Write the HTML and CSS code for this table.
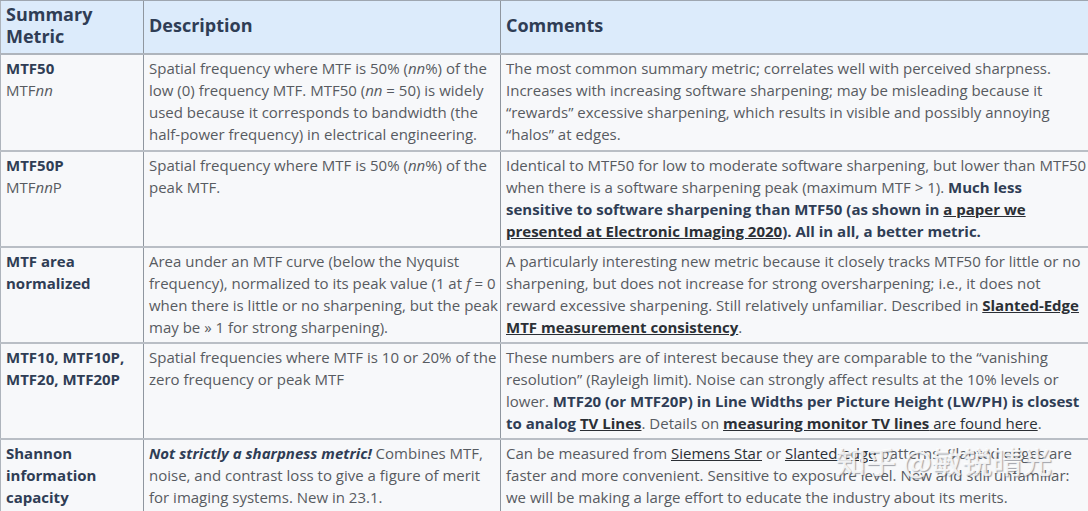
FILE: index.html
```html
<!DOCTYPE html>
<html>
<head>
<meta charset="utf-8">
<link rel="stylesheet" href="styles.css">
</head>
<body>
<div class="page">
<table class="metrics">
  <colgroup>
    <col class="c1"><col class="c2"><col class="c3">
  </colgroup>
  <thead>
    <tr>
      <th>Summary<br>Metric</th>
      <th>Description</th>
      <th>Comments</th>
    </tr>
  </thead>
  <tbody>
    <tr class="r1">
      <td><b>MTF50</b><br>MTF<i>nn</i></td>
      <td>Spatial frequency where MTF is 50% (<i>nn</i>%) of the low (0) frequency MTF. MTF50 (<i>nn</i> = 50) is widely used because it corresponds to bandwidth (the half-power frequency) in electrical engineering.</td>
      <td>The most common summary metric; correlates well with perceived sharpness. Increases with increasing software sharpening; may be misleading because it “rewards” excessive sharpening, which results in visible and possibly annoying “halos” at edges.</td>
    </tr>
    <tr class="r2">
      <td><b>MTF50P</b><br>MTF<i>nn</i>P</td>
      <td>Spatial frequency where MTF is 50% (<i>nn</i>%) of the peak MTF.</td>
      <td>Identical to MTF50 for low to moderate software sharpening, but lower than MTF50 when there is a software sharpening peak (maximum MTF &gt; 1). <b>Much less sensitive to software sharpening than MTF50 (as shown in <a>a paper we presented at Electronic Imaging 2020</a>). All in all, a better metric.</b></td>
    </tr>
    <tr class="r3">
      <td><b>MTF area normalized</b></td>
      <td>Area under an MTF curve (below the Nyquist frequency), normalized to its peak value (1 at <i>f</i> = 0 when there is little or no sharpening, but the peak may be » 1 for strong sharpening).</td>
      <td>A particularly interesting new metric because it closely tracks MTF50 for little or no sharpening, but does not increase for strong oversharpening; i.e., it does not reward excessive sharpening. Still relatively unfamiliar. Described in <a><b>Slanted-Edge MTF measurement consistency</b></a>.</td>
    </tr>
    <tr class="r4">
      <td><b>MTF10, MTF10P, MTF20, MTF20P</b></td>
      <td>Spatial frequencies where MTF is 10 or 20% of the zero frequency or peak MTF</td>
      <td>These numbers are of interest because they are comparable to the “vanishing resolution” (Rayleigh limit). Noise can strongly affect results at the 10% levels or lower. <b>MTF20 (or MTF20P) in Line Widths per Picture Height (LW/PH) is closest to analog <a>TV Lines</a></b>. Details on <a><b>measuring monitor TV lines</b> are found here</a>.</td>
    </tr>
    <tr class="r5">
      <td><b>Shannon information capacity</b></td>
      <td><b><i>Not strictly a sharpness metric!</i></b> Combines MTF, noise, and contrast loss to give a figure of merit for imaging systems. New in 23.1.</td>
      <td>Can be measured from <a>Siemens Star</a> or <a>Slanted-edge</a> patterns. Slanted edges are faster and more convenient. Sensitive to exposure level. New and still unfamiliar: we will be making a large effort to educate the industry about its merits.</td>
    </tr>
  </tbody>
</table>
<div class="watermark">知乎 @敏锐晴光</div>
</div>
</body>
</html>
```

FILE: styles.css
```css
html, body {
  margin: 0;
  padding: 0;
  background: #f7f8fa;
  overflow: hidden;
}
.page {
  position: relative;
  width: 1088px;
  height: 511px;
  overflow: hidden;
}
.metrics {
  border-collapse: collapse;
  width: 1100px;
  table-layout: fixed;
  font-family: "Open Sans", "Liberation Sans", sans-serif;
  font-size: 15px;
  line-height: 22px;
  color: #575b61;
  background: #f7f8fa;
}
.c1 { width: 143px; }
.c2 { width: 357px; }
.c3 { width: 600px; }
.metrics th {
  background: #dcebfb;
  color: #2f3d55;
  font-size: 18px;
  line-height: 22px;
  font-weight: 700;
  text-align: left;
  padding: 2px 5px 6px;
  height: 44px;
  border-top: 1px solid #9ea6b0;
  border-bottom: 2px solid #aeb4bc;
  border-left: 1px solid #8f969f;
}
.metrics th:first-child, .metrics td:first-child { border-left: 1px solid #aeb4bc; }
.metrics td {
  vertical-align: top;
  padding: 2px 2px 4px 5px;
  height: 88px;
  border-bottom: 2px solid #b9bec5;
  border-left: 1px solid #8f969f;
}
.metrics .r1 td { padding-top: 2px; padding-bottom: 5px; }
.metrics td:last-child { padding-right: 12px; }
.metrics b { color: #2f3d55; font-weight: 700; }
.metrics a { color: #2b2f35; text-decoration: underline; }
.metrics a b { color: #2b2f35; }
.watermark {
  position: absolute;
  left: 836px;
  top: 442px;
  font-family: "Noto Sans CJK SC", sans-serif;
  font-size: 30px;
  line-height: 36px;
  font-weight: 500;
  color: rgba(255,255,255,0.85);
  text-shadow: 1px 1px 1px rgba(90,95,105,0.55);
}
```
